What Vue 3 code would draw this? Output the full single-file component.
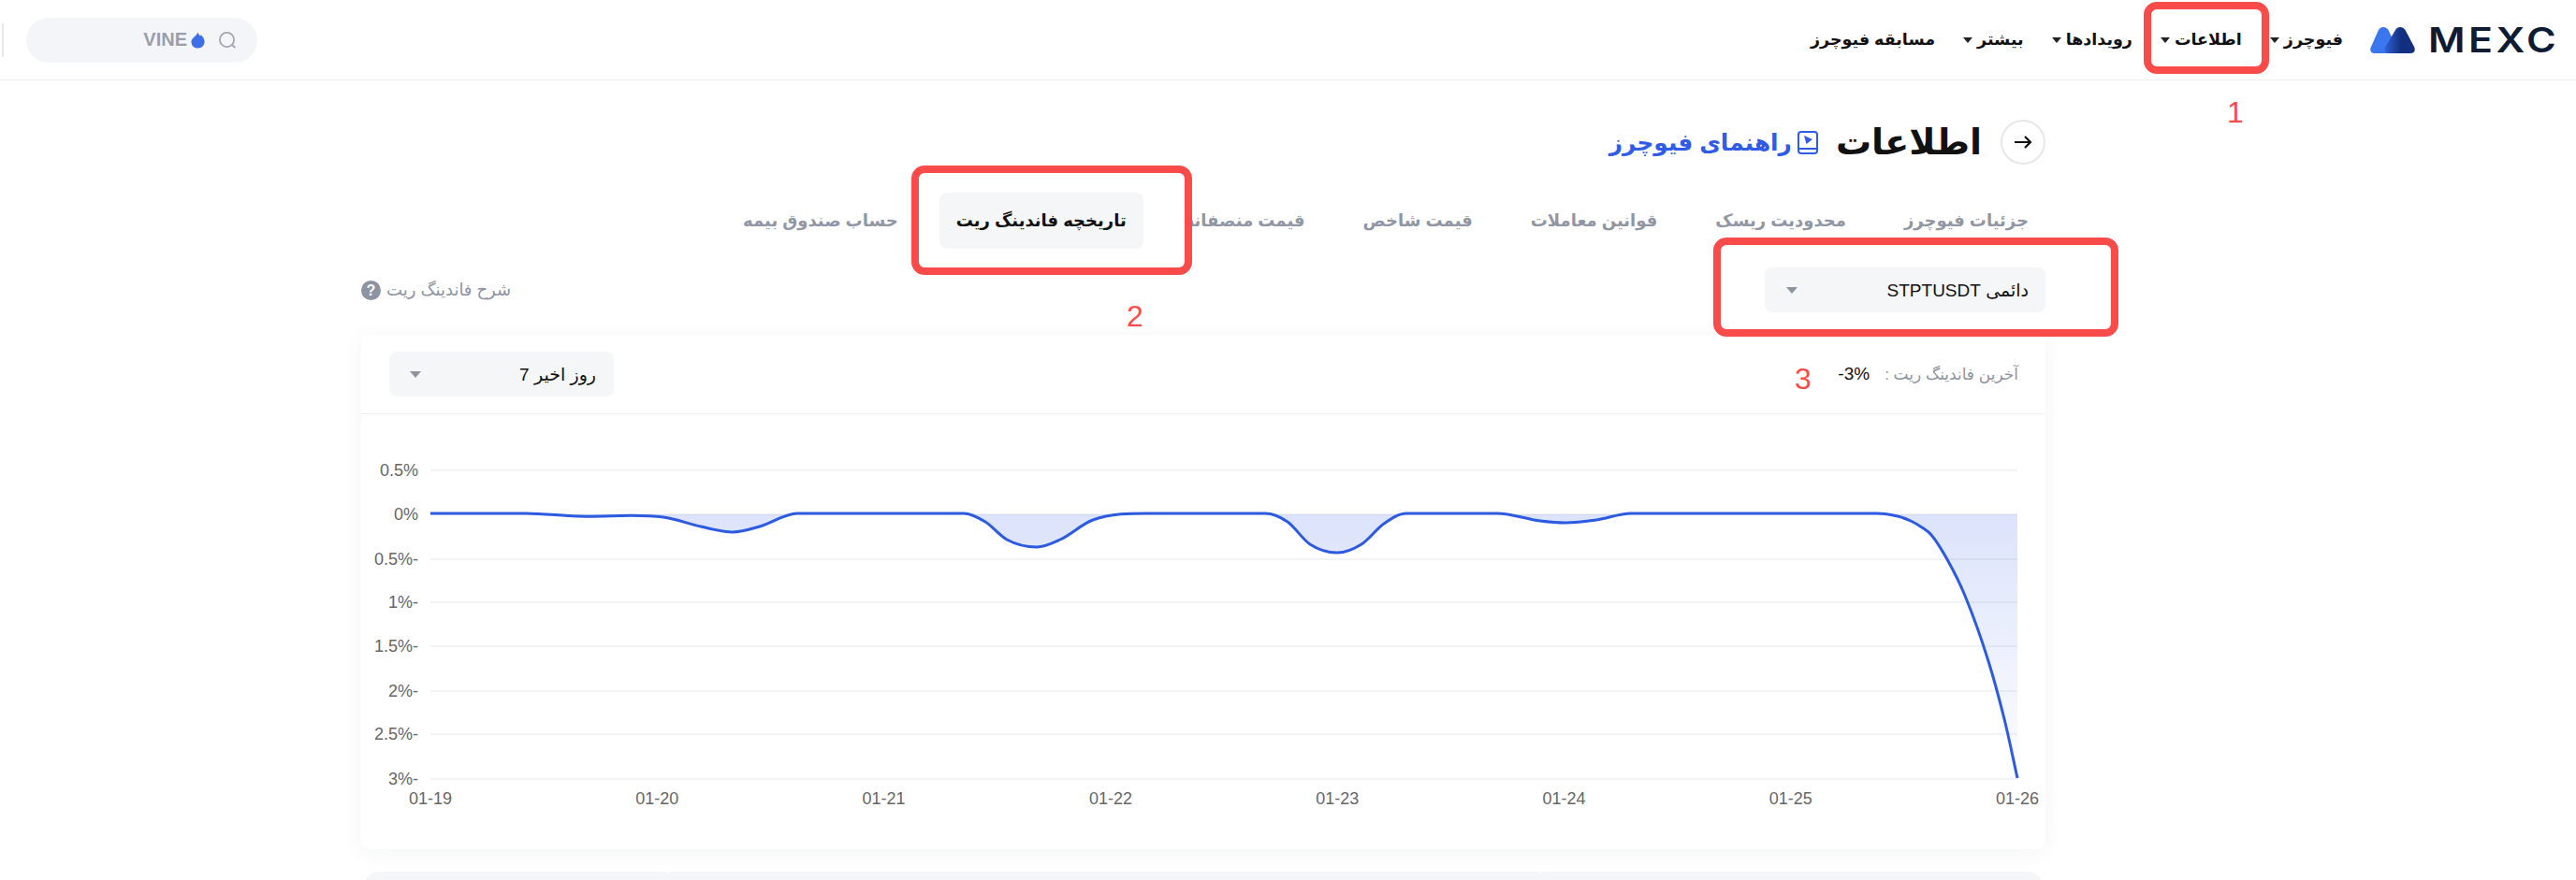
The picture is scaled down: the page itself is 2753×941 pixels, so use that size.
<script setup>
const grid = [
  { y: 503, label: '0.5%' },
  { y: 550, label: '0%' },
  { y: 598, label: '0.5%-' },
  { y: 644, label: '1%-' },
  { y: 691, label: '1.5%-' },
  { y: 739, label: '2%-' },
  { y: 785, label: '2.5%-' },
  { y: 833, label: '3%-' },
]
const dates = ['01-19', '01-20', '01-21', '01-22', '01-23', '01-24', '01-25', '01-26']
const tabs = ['جزئیات فیوچرز', 'محدودیت ریسک', 'قوانین معاملات', 'قیمت شاخص', 'قیمت منصفانه', 'تاریخچه فاندینگ ریت', 'حساب صندوق بیمه']
const nav = [
  { t: 'فیوچرز', arrow: true },
  { t: 'اطلاعات', arrow: true },
  { t: 'رویدادها', arrow: true },
  { t: 'بیشتر', arrow: true },
  { t: 'مسابقه فیوچرز', arrow: false },
]

// points read off the reference, page coordinates
const pts = [
  [460, 549], [562, 549], [617, 552], [709, 553], [749, 563], [783, 569], [812, 563], [852, 549],
  [1030, 549], [1053, 558], [1076, 577], [1108, 585], [1133, 577], [1168, 556], [1231, 549],
  [1352, 549], [1376, 558], [1400, 582], [1429, 591], [1455, 582], [1479, 560], [1503, 549],
  [1600, 549], [1646, 557], [1673, 559], [1706, 556], [1743, 549],
  [2006, 549], [2028, 552], [2042, 557], [2054, 564], [2064, 572],
  [2082, 600], [2100, 637], [2125, 707], [2143, 773], [2156, 832],
]

// cubic through the points, flat at every turn so the flat stretches stay flat
function smooth(p) {
  const slopes = p.map((b, i) => {
    const a = p[i - 1]
    const c = p[i + 1]
    if (!a) return 0
    if (!c) return (b[1] - a[1]) / (b[0] - a[0])
    const d0 = (b[1] - a[1]) / (b[0] - a[0])
    const d1 = (c[1] - b[1]) / (c[0] - b[0])
    if (d0 * d1 <= 0) return 0
    return (d0 + d1) / 2
  })
  let d = `M${p[0][0]} ${p[0][1]}`
  for (let i = 0; i < p.length - 1; i++) {
    const dx = (p[i + 1][0] - p[i][0]) / 3
    d += ` C${p[i][0] + dx} ${p[i][1] + slopes[i] * dx} ${p[i + 1][0] - dx} ${p[i + 1][1] - slopes[i + 1] * dx} ${p[i + 1][0]} ${p[i + 1][1]}`
  }
  return d
}
const line = smooth(pts)
const area = line + ' L2156 550 L460 550 Z'
</script>

<template>
  <div class="page">
    <header class="topbar">
      <div class="left">
        <span class="tick"></span>
        <div class="search">
          <svg class="search-icon" viewBox="0 0 20 20" fill="none" stroke="#a2a6b1" stroke-width="1.8">
            <circle cx="9.5" cy="9.5" r="7.6" />
            <path d="M15 15l3.4 3" />
          </svg>
          <svg class="flame" viewBox="0 0 16 18">
            <path fill="#3c6ee8" d="M8 0c.2 2 1.600 3 2.600 4.300.4-.4.600-.9.700-1.500 2.400 2 4.200 4.800 4.200 8C15.500 15 12.300 18 8 18S.5 15 .5 11C.5 6.500 6 5 8 0z" />
          </svg>
          <span class="vine">VINE</span>
        </div>
      </div>
      <div class="right">
        <nav class="nav">
          <span v-for="n in nav" :key="n.t" class="nav-item" dir="rtl">
            {{ n.t }}<i v-if="n.arrow" class="nav-arrow"></i>
          </span>
        </nav>
        <div class="logo">
          <svg class="logo-mark" viewBox="0 0 48 29">
            <defs>
              <linearGradient id="lg" gradientUnits="userSpaceOnUse" x1="15" y1="0" x2="33" y2="0">
                <stop offset="0" stop-color="#2f62d8" />
                <stop offset="1" stop-color="#12307f" />
              </linearGradient>
            </defs>
            <path fill="#3a76ee" d="M9 4C11 0 17 0 19.500 4L31 29H5C1 29-1 26 1 22z" />
            <path fill="url(#lg)" d="M27 4C29 0 35 0 37.500 4L47 22C49 26 47 29 43 29H19C16 29 15 25 16 23z" />
          </svg>
          <span class="logo-text">MEXC</span>
        </div>
      </div>
    </header>

    <main class="content">
      <div class="title-row" dir="rtl">
        <span class="back">
          <svg viewBox="0 0 20 20" fill="none" stroke="#111" stroke-width="2.200">
            <path d="M1 10h17M12 4l6 6-6 6" />
          </svg>
        </span>
        <h1 class="title">اطلاعات</h1>
        <a class="guide">
          <svg viewBox="0 0 22 25" fill="none" stroke="#2f5be7" stroke-width="2">
            <rect x="1" y="1" width="20" height="23" rx="3" />
            <path d="M1 19h20" />
            <path fill="#2f5be7" stroke="none" d="M7 5l9 4-6.500 5z" />
          </svg>
          <span>راهنمای فیوچرز</span>
        </a>
      </div>

      <div class="tabs" dir="rtl">
        <span v-for="(t, i) in tabs" :key="t" class="tab" :class="{ active: i === 5 }">{{ t }}</span>
      </div>

      <div class="filter-row">
        <span class="explain">
          <span class="help">?</span>
          <span dir="rtl">شرح فاندینگ ریت</span>
        </span>
        <div class="select symbol">
          <i class="caret"></i>
          <span dir="rtl">دائمی STPTUSDT</span>
        </div>
      </div>

      <section class="card">
        <div class="card-head">
          <div class="select range">
            <i class="caret"></i>
            <span dir="rtl">روز اخیر 7</span>
          </div>
          <div class="latest" dir="rtl">
            <span class="latest-label">آخرین فاندینگ ریت :</span>
            <span class="latest-value">3%-</span>
          </div>
        </div>
        <svg class="chart" viewBox="386 443 1800 465">
          <defs>
            <linearGradient id="fade" gradientUnits="userSpaceOnUse" x1="0" y1="550" x2="0" y2="833">
              <stop offset="0" stop-color="#2f5be7" stop-opacity="0.17" />
              <stop offset="1" stop-color="#2f5be7" stop-opacity="0.01" />
            </linearGradient>
          </defs>
          <g v-for="g in grid" :key="g.y">
            <line x1="460" x2="2156" :y1="g.y" :y2="g.y" stroke="#eeeff2" stroke-width="1.500" />
            <text x="447" :y="g.y + 6" text-anchor="end" class="axis">{{ g.label }}</text>
          </g>
          <path :d="area" fill="url(#fade)" />
          <path :d="line" fill="none" stroke="#2c5ae0" stroke-width="3" />
          <text v-for="(d, i) in dates" :key="d" :x="460 + i * 242.3" y="860" text-anchor="middle" class="axis">{{ d }}</text>
        </svg>
      </section>

      <div class="table-head">
        <span class="cell"></span><span class="cell"></span><span class="cell"></span>
      </div>
    </main>

    <!-- red marks drawn over the screenshot -->
    <div class="mark m1"></div>
    <div class="mark m2"></div>
    <div class="mark m3"></div>
    <span class="num n1">1</span>
    <span class="num n2">2</span>
    <span class="num n3">3</span>
  </div>
</template>

<style>
html, body { background: #fff; }
</style>

<style scoped>
.page {
  position: relative;
  height: 941px;
  overflow: hidden;
  font-family: "Liberation Sans", "DejaVu Sans", sans-serif;
  color: #111;
}
.topbar {
  height: 85px;
  border-bottom: 1px solid #eeeeee;
  display: flex;
  justify-content: space-between;
  align-items: center;
  padding: 0 22px 0 2px;
}
.left { display: flex; align-items: center; gap: 24px; }
.tick { width: 2px; height: 36px; background: #e8e8e8; }
.search {
  width: 247px;
  height: 48px;
  background: #f4f5f8;
  border-radius: 24px;
  display: flex;
  flex-direction: row-reverse;
  justify-content: flex-start;
  align-items: center;
  gap: 4px;
  padding-right: 22px;
  box-sizing: border-box;
  color: #9a9fab;
  font-weight: 700;
  font-size: 20px;
}
.search-icon { width: 20px; height: 20px; margin-left: 10px; }
.flame { width: 15px; height: 18px; }
.right { display: flex; align-items: center; gap: 29px; }
.nav { display: flex; flex-direction: row-reverse; align-items: center; gap: 30px; }
.nav-item {
  display: flex;
  align-items: center;
  gap: 5px;
  font-size: 17.500px;
  font-weight: 700;
  color: #111;
  white-space: nowrap;
}
.nav-arrow {
  border-left: 5px solid transparent;
  border-right: 5px solid transparent;
  border-top: 6px solid #222;
}
.logo { display: flex; align-items: center; gap: 14px; height: 29px; width: 198px; }
.logo-mark { width: 48px; height: 29px; flex: none; }
.logo-text {
  font-family: "Inter", sans-serif;
  font-size: 37px;
  line-height: 29px;
  font-weight: 600;
  color: #0d1b33;
  letter-spacing: 3px;
  transform: scaleX(1.16);
  transform-origin: left center;
}
.content { padding: 42px 567px 0 386px; }
.title-row { display: flex; align-items: center; height: 48px; }
.back {
  width: 48px;
  height: 48px;
  box-sizing: border-box;
  border: 2px solid #e7e7e7;
  border-radius: 50%;
  display: flex;
  align-items: center;
  justify-content: center;
}
.back svg { width: 20px; height: 20px; }
.title { font-size: 38px; font-weight: 700; margin: 0 20px 0 19px; color: #111; }
.guide {
  display: flex;
  align-items: center;
  gap: 6px;
  font-size: 24.800px;
  font-weight: 700;
  color: #2f5be7;
}
.guide svg { width: 22px; height: 25px; }
.tabs {
  display: flex;
  align-items: center;
  height: 60px;
  margin-top: 30px;
  gap: 62px;
  padding-right: 18px;
}
.tab { font-size: 18px; font-weight: 700; color: #9096a3; white-space: nowrap; }
.tab.active {
  background: #f5f6f8;
  color: #111;
  height: 60px;
  line-height: 60px;
  padding: 0 18px;
  border-radius: 8px;
  margin: 0 -18px;
}
.filter-row {
  display: flex;
  justify-content: space-between;
  align-items: center;
  margin-top: 20px;
  height: 48px;
}
.explain { display: flex; align-items: center; gap: 6px; font-size: 18px; color: #8d93a0; }
.help {
  width: 21px;
  height: 21px;
  background: #8d93a0;
  color: #fff;
  border-radius: 50%;
  font-size: 16px;
  font-weight: 700;
  line-height: 21px;
  text-align: center;
}
.select {
  height: 48px;
  background: #f5f6f8;
  border-radius: 8px;
  display: flex;
  align-items: center;
  justify-content: space-between;
  box-sizing: border-box;
  font-size: 19px;
  color: #111;
}
.symbol { width: 300px; padding: 0 18px 0 23px; }
.range { width: 240px; padding: 0 19px 0 22px; }
.caret {
  border-left: 6.500px solid transparent;
  border-right: 6.500px solid transparent;
  border-top: 7px solid #8d93a0;
}
.card {
  margin-top: 24px;
  height: 550px;
  border-radius: 8px;
  background: #fff;
  box-shadow: 0 4px 24px rgba(20, 30, 60, 0.05);
  display: flex;
  flex-direction: column;
}
.card-head {
  height: 84px;
  border-bottom: 1px solid #eeeff2;
  display: flex;
  align-items: center;
  justify-content: space-between;
  padding: 0 29px 0 30px;
  flex: none;
}
.latest { display: flex; align-items: center; gap: 16px; font-size: 17px; }
.latest-label { color: #8d93a0; }
.latest-value { font-size: 19px; color: #111; }
.chart { width: 1800px; height: 465px; display: block; }
.axis { font-size: 18px; fill: #666; font-family: "Liberation Sans", sans-serif; }
.table-head {
  margin: 24px 3px 0;
  height: 40px;
  display: grid;
  grid-template-columns: 325px 933px 1fr;
}
.cell { background: #f5f6f8; border-radius: 4px 4px 0 0; }
.cell:first-child { border-top-left-radius: 16px; }
.cell:last-child { border-top-right-radius: 16px; }
.mark {
  position: absolute;
  border: 8px solid #f94c4a;
  border-radius: 14px;
  box-sizing: border-box;
}
.m1 { left: 2291px; top: 2px; width: 134px; height: 77px; }
.m2 { left: 974px; top: 177px; width: 300px; height: 117px; }
.m3 { left: 1831px; top: 254px; width: 433px; height: 106px; }
.num { position: absolute; color: #f94c4a; font-size: 32px; line-height: 32px; }
.n1 { left: 2380px; top: 104px; }
.n2 { left: 1204px; top: 322px; }
.n3 { left: 1918px; top: 389px; }
</style>
